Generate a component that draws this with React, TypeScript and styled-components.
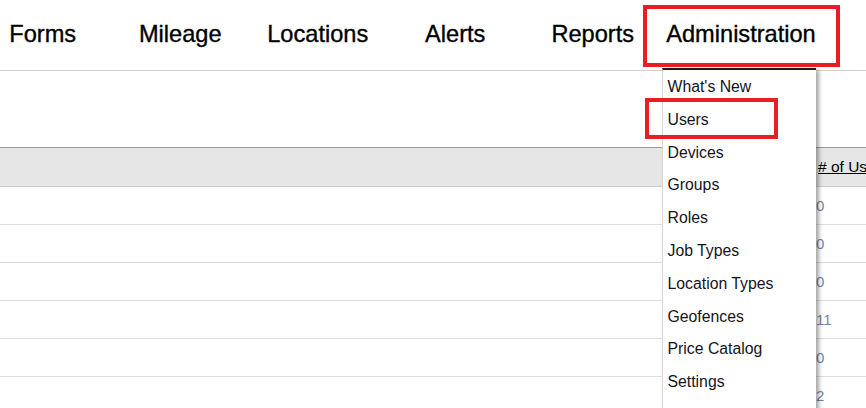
import React from 'react';
import styled, { createGlobalStyle } from 'styled-components';

const GlobalStyle = createGlobalStyle`
    html, body {
        margin: 0;
        padding: 0;
        background: #fff;
        overflow: hidden;
    }
    body {
        font-family: 'Liberation Sans', Arial, Helvetica, sans-serif;
        width: 866px;
        height: 408px;
    }
`;

const Page = styled.div`
    width: 866px;
    height: 408px;
    overflow: hidden;
    position: relative;
`;

const NavBar = styled.nav`
    display: flex;
    align-items: stretch;
    height: 70px;
    border-bottom: 1px solid #cfcfcf;
    margin-left: -26px;
    position: relative;
    z-index: 2;
`;

const NavItem = styled.div<{ $wide?: boolean }>`
    position: relative;
    display: flex;
    align-items: center;
    justify-content: center;
    width: ${(p) => (p.$wide ? '159px' : '137.5px')};
    flex: none;
    font-size: 23.6px;
    color: #000;
    -webkit-text-stroke: 0.35px #000;
    padding-bottom: 2px;
    box-sizing: border-box;
`;

const Highlight = styled.div`
    position: absolute;
    border: 4px solid #ec1c24;
    pointer-events: none;
`;

const NavHighlight = styled(Highlight)`
    left: -19px;
    right: -19px;
    top: 5px;
    bottom: 3px;
`;

const Dropdown = styled.ul`
    position: absolute;
    left: 0;
    top: 68px;
    width: 154px;
    margin: 0;
    padding: 0;
    list-style: none;
    background: #fff;
    border-top: 2px solid #1a1a1a;
    border-left: 1px solid #d6d6d6;
    box-shadow: 3px 2px 4px rgba(0, 0, 0, 0.35);
    height: 400px;
    box-sizing: border-box;
    -webkit-text-stroke: 0;
`;

const DropdownItem = styled.li`
    position: relative;
    font-size: 15.8px;
    line-height: 19px;
    padding: 7px 4px 6.8px 5px;
    color: #141420;
`;

const ItemHighlight = styled(Highlight)`
    left: -18px;
    right: 38px;
    top: -5px;
    bottom: -3px;
`;

const Spacer = styled.div`
    height: 76px;
`;

const Table = styled.div`
    width: 960px;
    border-top: 1px solid #9a9a9a;
`;

const HeaderRow = styled.div`
    display: grid;
    grid-template-columns: 812px 1fr;
    height: 38px;
    background: #e6e6e6;
    border-bottom: 1px solid #cbcbcb;
    align-items: center;
`;

const Row = styled.div`
    display: grid;
    grid-template-columns: 812px 1fr;
    height: 37px;
    border-bottom: 1px solid #dedede;
    align-items: center;
`;

const HeaderCell = styled.div`
    font-size: 15.5px;
    color: #000;
    padding-left: 6px;
    text-decoration: underline;
    white-space: nowrap;
`;

const NumberCell = styled.div`
    font-size: 15px;
    color: #6f87ab;
    padding-left: 4px;
`;

const navItems = ['Forms', 'Mileage', 'Locations', 'Alerts', 'Reports'];

const adminItems = [
    "What's New",
    'Users',
    'Devices',
    'Groups',
    'Roles',
    'Job Types',
    'Location Types',
    'Geofences',
    'Price Catalog',
    'Settings',
];

const userCounts = ['0', '0', '0', '11', '0', '2'];

export default function App() {
    return (
        <Page>
            <GlobalStyle />
            <NavBar>
                {navItems.map((item) => (
                    <NavItem key={item}>{item}</NavItem>
                ))}
                <NavItem $wide>
                    Administration
                    <NavHighlight />
                    <Dropdown>
                        {adminItems.map((item) => (
                            <DropdownItem key={item}>
                                {item}
                                {item === 'Users' && <ItemHighlight />}
                            </DropdownItem>
                        ))}
                    </Dropdown>
                </NavItem>
            </NavBar>
            <Spacer />
            <Table>
                <HeaderRow>
                    <div />
                    <HeaderCell># of Users</HeaderCell>
                </HeaderRow>
                {userCounts.map((count, i) => (
                    <Row key={i}>
                        <div />
                        <NumberCell>{count}</NumberCell>
                    </Row>
                ))}
            </Table>
        </Page>
    );
}
